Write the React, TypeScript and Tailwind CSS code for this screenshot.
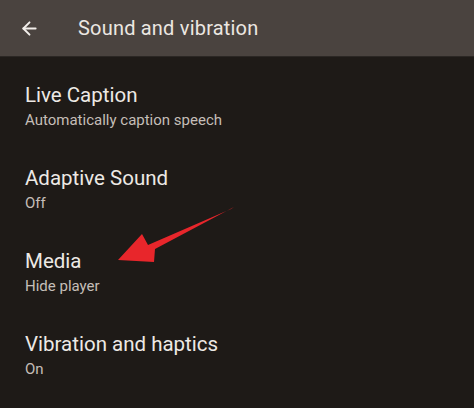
import { ArrowLeft } from 'lucide-react';

interface SettingItem {
  title: string;
  summary: string;
}

const items: SettingItem[] = [
  { title: 'Live Caption', summary: 'Automatically caption speech' },
  { title: 'Adaptive Sound', summary: 'Off' },
  { title: 'Media', summary: 'Hide player' },
  { title: 'Vibration and haptics', summary: 'On' },
];

const App = () => {
  return (
    <div className="relative w-[474px] h-[408px] overflow-hidden bg-[#1e1a17] font-['Roboto',sans-serif]">
      {/* Top app bar */}
      <div className="flex items-center h-[57px] bg-[#4a433f] border-b border-[#2b2724]">
        <ArrowLeft className="ml-[19px] w-[21px] h-[21px] text-[#f2eeea]" strokeWidth={2.2} />
        <span className="ml-[38px] text-[20px] tracking-[0.2px] text-[#ece7e2] leading-none">Sound and vibration</span>
      </div>

      {/* Settings list */}
      <div className="flex flex-col pt-[25px] pl-[25px]">
        {items.map((item) => (
          <div key={item.title} className="flex flex-col h-[83px]">
            <span className="text-[20.5px] leading-[27px] text-[#ede9e5]">{item.title}</span>
            <span className="text-[15px] leading-[22px] text-[#c5beb8]">{item.summary}</span>
          </div>
        ))}
      </div>

      {/* Red pointer arrow annotation */}
      <svg className="absolute left-0 top-0 pointer-events-none" width="474" height="408" viewBox="0 0 474 408">
        <polygon
          points="234,207 155,249 154,262 118,260 142,234 148,245 231,209"
          fill="#e8262b"
        />
      </svg>
    </div>
  );
};

export default App;
